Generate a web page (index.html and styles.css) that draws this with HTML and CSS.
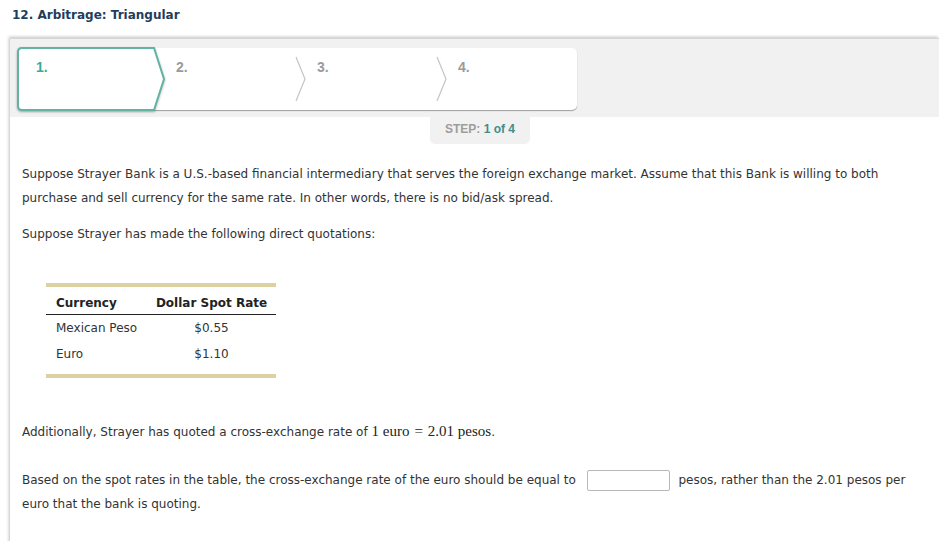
FILE: index.html
```html
<!DOCTYPE html>
<html>
<head>
<meta charset="utf-8">
<link rel="stylesheet" href="styles.css">
</head>
<body>
<h1 class="title">12. Arbitrage: Triangular</h1>
<div class="panel">
  <div class="band">
    <div class="stepper">
      <div class="step step-active">
        <svg class="step-outline" width="150" height="64" viewBox="0 0 150 64">
          <path d="M5 1 H137 L147 32 L137 63 H5 Q1 63 1 59 V5 Q1 1 5 1 Z" fill="#fff" stroke="#62b3a2" stroke-width="2"/>
        </svg>
        <span class="step-num">1.</span>
      </div>
      <div class="step">
        <span class="step-num">2.</span>
        <svg class="chev" width="12" height="46" viewBox="0 0 12 46"><path d="M1 1 L10 23 L1 45" fill="none" stroke="#c4c4c4" stroke-width="1.2"/></svg>
      </div>
      <div class="step">
        <span class="step-num">3.</span>
        <svg class="chev" width="12" height="46" viewBox="0 0 12 46"><path d="M1 1 L10 23 L1 45" fill="none" stroke="#c4c4c4" stroke-width="1.2"/></svg>
      </div>
      <div class="step step-last">
        <span class="step-num">4.</span>
      </div>
    </div>
  </div>
  <div class="badge"><span class="badge-label">STEP:</span> <span class="badge-val">1 of 4</span></div>

  <div class="content">
    <p class="para">Suppose Strayer Bank is a U.S.-based financial intermediary that serves the foreign exchange market. Assume that this Bank is willing to both purchase and sell currency for the same rate. In other words, there is no bid/ask spread.</p>
    <p class="para">Suppose Strayer has made the following direct quotations:</p>

    <table class="rates">
      <thead>
        <tr><th class="c1">Currency</th><th class="c2">Dollar Spot Rate</th></tr>
      </thead>
      <tbody>
        <tr><td class="c1">Mexican Peso</td><td class="c2">$0.55</td></tr>
        <tr class="last"><td class="c1">Euro</td><td class="c2">$1.10</td></tr>
      </tbody>
    </table>

    <p class="para para-add">Additionally, Strayer has quoted a cross-exchange rate of <span class="math">1&nbsp;euro<span class="eq">=</span>2.01&nbsp;pesos</span>.</p>

    <p class="para para-based">Based on the spot rates in the table, the cross-exchange rate of the euro should be equal to <input class="answer" type="text"> pesos, rather than the 2.01 pesos per euro that the bank is quoting.</p>
  </div>
</div>
</body>
</html>
```

FILE: styles.css
```css
html, body {
  margin: 0;
  padding: 0;
  background: #fff;
}
body {
  font-family: "DejaVu Sans", Verdana, sans-serif;
  color: #333;
  overflow: hidden;
  height: 541px;
}
.title {
  margin: 0;
  padding: 8px 0 0 12px;
  height: 30px;
  font-size: 12px;
  font-weight: bold;
  color: #1d3e5e;
  line-height: 15px;
}
.panel {
  margin-left: 10px;
  box-shadow: -1px -1px 3px rgba(0,0,0,0.25);
  min-height: 510px;
}
.band {
  background: #f1f1f1;
  padding: 9px 0 7px 8px;
  border-top: 1px solid #d6d6d6;
}
.stepper {
  display: flex;
  width: 559px;
  height: 62px;
  background: #fff;
  border-radius: 5px;
  box-shadow: 0 1px 1px rgba(0,0,0,0.35);
}
.step {
  position: relative;
  width: 141px;
  flex: none;
  padding-left: 11px;
  box-sizing: border-box;
}
.step-active {
  width: 147px;
  padding-left: 18px;
}
.step-last {
  flex: 1;
}
.step-outline {
  position: absolute;
  left: -1px;
  top: -1px;
  filter: drop-shadow(0 1px 1px rgba(0,0,0,0.3));
}
.step-num {
  position: relative;
  display: block;
  margin-top: 11px;
  font-family: "Liberation Sans", Arial, sans-serif;
  font-size: 14px;
  font-weight: bold;
  line-height: 17px;
  color: #9a9a9a;
}
.step-active .step-num {
  color: #3aa999;
}
.chev {
  position: absolute;
  right: -1px;
  top: 8px;
}
.badge {
  margin-left: 420px;
  width: 100px;
  height: 27px;
  background: #f1f1f1;
  border-radius: 0 0 5px 5px;
  text-align: center;
  font-family: "Liberation Sans", Arial, sans-serif;
  font-size: 12px;
  font-weight: bold;
  line-height: 25px;
}
.badge-label { color: #9d9d9d; }
.badge-val { color: #3e8f8a; }
.content {
  padding: 18px 12px 0 12px;
}
.para {
  margin: 0 0 12px 0;
  font-size: 12px;
  line-height: 24px;
  color: #333;
}
.rates {
  margin: 37px 0 0 24px;
  border-collapse: collapse;
  width: 230px;
  font-size: 12px;
  border-top: 4px solid #dcd1a3;
  border-bottom: 4px solid #dcd1a3;
}
.rates th {
  font-weight: bold;
  color: #222;
  padding: 9px 0 4px 0;
  line-height: 14px;
  border-bottom: 1px solid #222;
}
.rates td {
  padding: 6px 0;
  line-height: 14px;
  color: #333;
}
.rates tr.last td {
  padding-bottom: 13px;
}
.rates .c1 {
  text-align: left;
  padding-left: 10px;
  width: 91px;
}
.rates .c2 {
  text-align: center;
}
.para-add {
  margin-top: 42px;
  margin-bottom: 24px;
}
.math {
  font-family: "Liberation Serif", "DejaVu Serif", serif;
  font-size: 15px;
  line-height: 14px;
  color: #222;
}
.eq {
  margin: 0 5px;
}
.answer {
  box-sizing: border-box;
  width: 83px;
  height: 21px;
  margin: 0 5px 0 7px;
  border: 1px solid #b8b8b8;
  border-radius: 2px;
  vertical-align: middle;
  padding: 0;
}
```
